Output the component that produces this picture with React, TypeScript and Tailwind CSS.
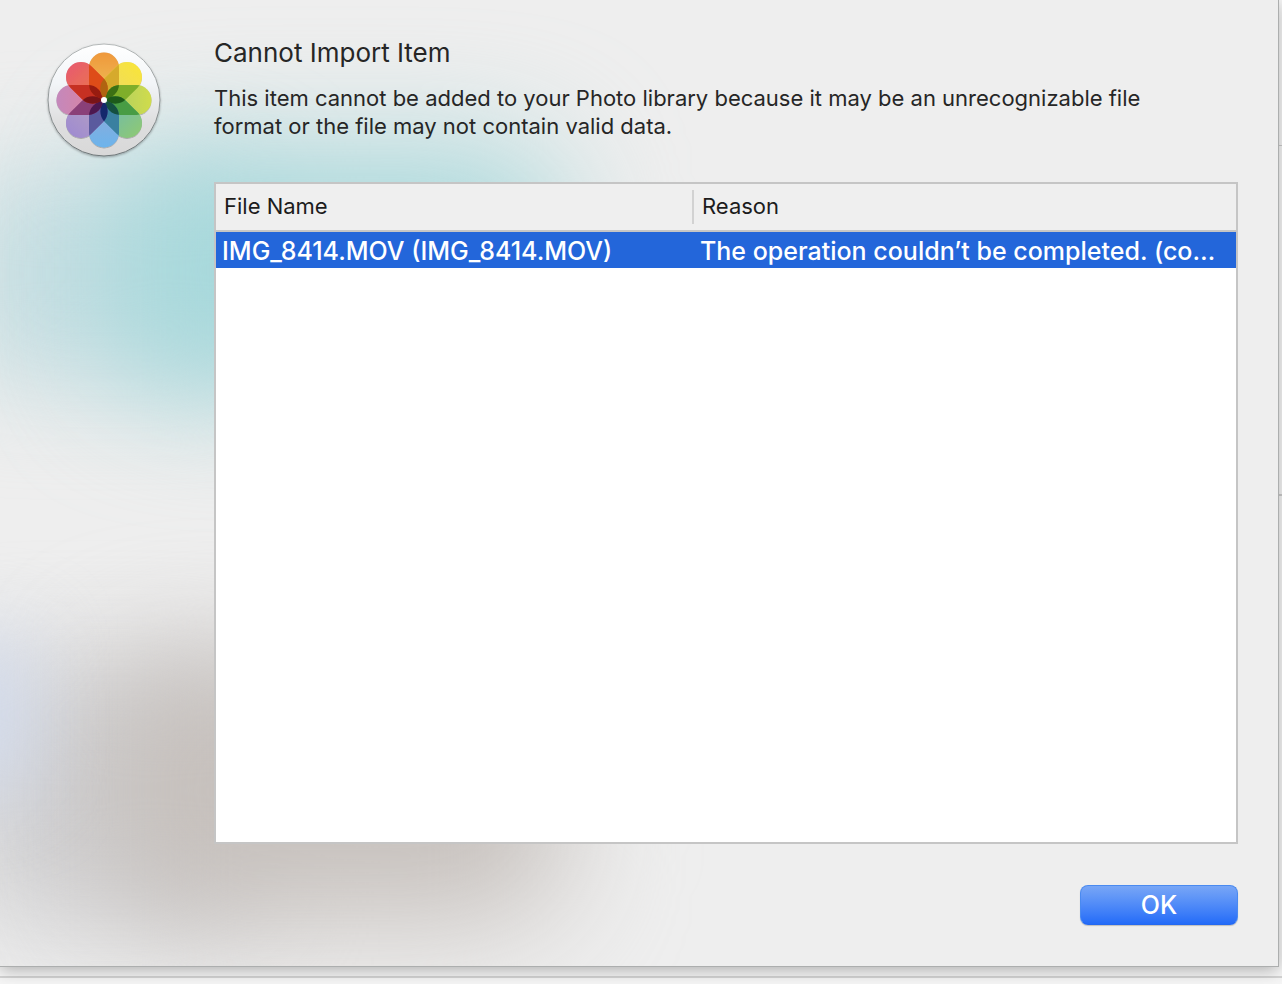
import React from "react";

interface ImportFailure {
  id: number;
  fileName: string;
  reason: string;
}

interface Petal {
  angle: number;
  from: string;
  to: string;
  overlap: string;
  core: string;
}

const failures: ImportFailure[] = [
  {
    id: 1,
    fileName: "IMG_8414.MOV (IMG_8414.MOV)",
    reason: "The operation couldn’t be completed. (co…",
  },
];

// overlap: shared area with the next petal, core: shared area with the one after it
const petals: Petal[] = [
  { angle: 0, from: "#ef983c", to: "#efb650", overlap: "#d6aa2c", core: "#3c7014" },
  { angle: 45, from: "#f8e43c", to: "#f0dc5c", overlap: "#7fae2a", core: "#1d5a1a" },
  { angle: 90, from: "#d0dc4c", to: "#b4d060", overlap: "#489c44", core: "#155040" },
  { angle: 135, from: "#8cc878", to: "#74bca4", overlap: "#3a80a0", core: "#14286c" },
  { angle: 180, from: "#6cb4ec", to: "#88acdc", overlap: "#5a5a9e", core: "#4c1850" },
  { angle: 225, from: "#a08cd0", to: "#b09cc4", overlap: "#8a4078", core: "#781418" },
  { angle: 270, from: "#c488bc", to: "#d884a4", overlap: "#c63022", core: "#981c10" },
  { angle: 315, from: "#e85c6c", to: "#ea7450", overlap: "#de4c18", core: "#b06410" },
];

function PetalShape({ angle, fill }: { angle: number; fill: string }) {
  return (
    <rect
      x="45"
      y="12.5"
      width="30"
      height="46.5"
      rx="15"
      fill={fill}
      transform={`rotate(${angle} 60 60)`}
    />
  );
}

function PhotosIcon() {
  return (
    <svg
      className="h-[120px] w-[120px] shrink-0"
      viewBox="0 0 120 120"
      role="img"
      aria-label="Photos"
    >
      <defs>
        <linearGradient id="disc" x1="0" y1="0" x2="0" y2="1">
          <stop offset="0" stopColor="#ffffff" />
          <stop offset="0.35" stopColor="#f2f5f8" />
          <stop offset="0.7" stopColor="#dededf" />
          <stop offset="1" stopColor="#d8d8d8" />
        </linearGradient>
        <linearGradient id="rim" x1="0" y1="0" x2="0" y2="1">
          <stop offset="0" stopColor="#b4b8b8" />
          <stop offset="1" stopColor="#6e7678" />
        </linearGradient>
        <filter id="discShadow" x="-10%" y="-10%" width="120%" height="120%">
          <feDropShadow dx="0" dy="1" stdDeviation="1" floodOpacity="0.3" />
        </filter>
        <filter id="petalShadow" x="-10%" y="-10%" width="120%" height="120%">
          <feDropShadow dx="0" dy="0.5" stdDeviation="0.5" floodOpacity="0.45" />
        </filter>
        {petals.map((petal) => (
          <React.Fragment key={petal.angle}>
            <linearGradient id={`fill${petal.angle}`} x1="0" y1="0" x2="0" y2="1">
              <stop offset="0" stopColor={petal.from} />
              <stop offset="0.7" stopColor={petal.to} />
            </linearGradient>
            <clipPath id={`clip${petal.angle}`}>
              <rect
                x="45"
                y="12.5"
                width="30"
                height="46.5"
                rx="15"
                transform={`rotate(${petal.angle} 60 60)`}
              />
            </clipPath>
          </React.Fragment>
        ))}
      </defs>
      <circle
        cx="60"
        cy="60"
        r="56"
        fill="url(#disc)"
        stroke="url(#rim)"
        filter="url(#discShadow)"
      />
      <g filter="url(#petalShadow)">
        {petals.map((petal) => (
          <PetalShape
            key={petal.angle}
            angle={petal.angle}
            fill={`url(#fill${petal.angle})`}
          />
        ))}
      </g>
      {petals.map((petal) => (
        <g key={petal.angle} clipPath={`url(#clip${petal.angle})`}>
          <PetalShape angle={petal.angle + 45} fill={petal.overlap} />
        </g>
      ))}
      {petals.map((petal) => (
        <g key={petal.angle} clipPath={`url(#clip${petal.angle})`}>
          <PetalShape angle={petal.angle + 90} fill={petal.core} />
        </g>
      ))}
      <circle cx="60" cy="60" r="3" fill="#ffffff" />
    </svg>
  );
}

// Colours of the window behind showing through the sheet
function Vibrancy() {
  return (
    <div className="absolute inset-0 -z-10 overflow-hidden bg-[#eeeeee]">
      <div className="absolute top-[170px] -left-[40px] h-[210px] w-[300px] bg-[#c6dee2] blur-[50px]" />
      <div className="absolute top-[150px] left-[110px] h-[240px] w-[450px] rounded-[60px] bg-[#a6d8db] blur-[60px]" />
      <div className="absolute top-[670px] -left-[40px] h-[250px] w-[300px] bg-[#d0d0d2] blur-[54px]" />
      <div className="absolute top-[660px] left-[100px] h-[260px] w-[460px] rounded-[60px] bg-[#c6c0bc] blur-[60px]" />
      <div className="absolute top-[640px] -left-[80px] h-[150px] w-[110px] bg-[#d2dbec] blur-[40px]" />
    </div>
  );
}

// Window underneath, only its edges are visible around the sheet
function ParentWindow() {
  return (
    <div className="absolute inset-0 -z-20 flex flex-col bg-[#f6f6f6]">
      <div className="h-[146px] border-b border-[#cccccc]" />
      <div className="h-[350px] border-b-2 border-[#cccccc]" />
      <div className="flex-1" />
      <div className="h-2 border-t-2 border-[#d4d4d4]" />
    </div>
  );
}

export default function App() {
  return (
    <div className="relative isolate flex min-h-screen flex-col overflow-hidden pr-1 pb-[18px] font-['Inter','Liberation_Sans',sans-serif] text-[#262626]">
      <ParentWindow />
      <main
        role="alertdialog"
        aria-labelledby="dialog-title"
        className="relative isolate flex flex-1 gap-[50px] pr-10 pb-[41px] pl-11 shadow-[0_0_0_1px_#acaeae,0_4px_16px_rgba(0,0,0,0.3)]"
      >
        <Vibrancy />
        <div className="pt-10">
          <PhotosIcon />
        </div>

        <div className="flex min-w-0 flex-1 flex-col pt-[37px]">
          <h1 id="dialog-title" className="text-[26px] leading-8">
            Cannot Import Item
          </h1>
          <p className="mt-[15px] pr-10 text-[22px] leading-7">
            This item cannot be added to your Photo library because it may be an
            unrecognizable file format or the file may not contain valid data.
          </p>

          {/* Failed files */}
          <div className="mt-[42px] flex-1 border-2 border-[#c5c5c5] bg-white">
            <table className="w-full table-fixed border-separate border-spacing-0 text-left">
              <thead className="bg-[#efefef] text-[22px] text-[#1c1c1c]">
                <tr className="h-12">
                  <th
                    scope="col"
                    className="w-[476px] border-b-2 border-[#c5c5c5] p-0 font-normal"
                  >
                    <div className="h-[34px] pl-2 leading-8">File Name</div>
                  </th>
                  <th
                    scope="col"
                    className="border-b-2 border-[#c5c5c5] p-0 font-normal"
                  >
                    <div className="h-[34px] border-l-2 border-[#d2d2d2] pl-2 leading-8">
                      Reason
                    </div>
                  </th>
                </tr>
              </thead>
              <tbody className="text-[25px] font-medium text-white">
                {failures.map((failure) => (
                  <tr key={failure.id} className="h-9 bg-[#2366da]">
                    <td className="truncate pt-0.5 pb-0 pl-1.5 leading-[34px]">
                      {failure.fileName}
                    </td>
                    <td className="truncate pt-0.5 pb-0 pl-2 leading-[34px]">
                      {failure.reason}
                    </td>
                  </tr>
                ))}
              </tbody>
            </table>
          </div>

          <button
            type="button"
            className="mt-[41px] h-10 w-[158px] self-end rounded-lg border border-[#4a8af0] border-b-[#2468f0] bg-linear-to-b from-[#78a6f6] to-[#236bf8] text-[25px] leading-9 font-medium text-white shadow-[0_1px_1px_rgba(0,0,0,0.2)]"
          >
            OK
          </button>
        </div>
      </main>
    </div>
  );
}
